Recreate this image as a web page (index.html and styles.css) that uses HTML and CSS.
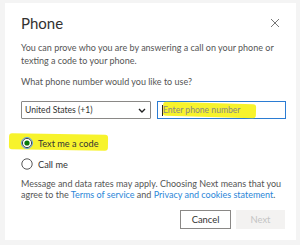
FILE: index.html
```html
<!DOCTYPE html>
<html>
<head>
<meta charset="utf-8">
<link rel="stylesheet" href="styles.css">
</head>
<body>
<div class="dialog">
  <div class="head">
    <div class="title">Phone</div>
    <svg class="close" width="10" height="10" viewBox="0 0 10 10"><path d="M1 1L9 9M9 1L1 9" stroke="#777" stroke-width="1" fill="none"/></svg>
  </div>
  <p class="intro">You can prove who you are by answering a call on your phone or texting a code to your phone.</p>
  <p class="question">What phone number would you like to use?</p>
  <div class="fields">
    <div class="select"><span>United States (+1)</span>
      <svg width="8" height="5" viewBox="0 0 8 5"><path d="M1 1L4 4L7 1" stroke="#222" stroke-width="1.4" fill="none"/></svg>
    </div>
    <div class="input"><span class="caret"></span><span class="ph">Enter phone number</span><span class="mark mark1"></span></div>
  </div>
  <div class="radios">
    <div class="radio sel"><span class="mark mark2"></span>
      <svg width="12" height="12" viewBox="0 0 12 12"><circle cx="6" cy="6" r="5.5" fill="#fff" stroke="#5aa0e0" stroke-width="1"/><circle cx="6" cy="6" r="4.6" fill="none" stroke="#333" stroke-width="0.9"/><circle cx="6" cy="6" r="2.6" fill="#0a7a0a"/></svg>
      <span class="lbl">Text me a code</span></div>
    <div class="radio">
      <svg width="12" height="12" viewBox="0 0 12 12"><circle cx="6" cy="6" r="5.2" fill="#fff" stroke="#444" stroke-width="0.9"/></svg>
      <span class="lbl">Call me</span></div>
  </div>
  <p class="note">Message and data rates may apply. Choosing Next means that you agree to the <a>Terms of service</a> and <a>Privacy and cookies statement</a>.</p>
  <div class="buttons">
    <div class="btn cancel">Cancel</div>
    <div class="btn next">Next</div>
  </div>
</div>
</body>
</html>
```

FILE: styles.css
```css
html, body { margin: 0; padding: 0; }
body {
  background: #f4f4f4;
  font-family: Lato, "Noto Sans", sans-serif;
  width: 300px;
  height: 245px;
  overflow: hidden;
}
.dialog {
  margin: 3px 4px 0 5px;
  height: 237px;
  background: #fff;
  box-sizing: border-box;
  padding: 12px 10px 0 16px;
  display: flex;
  flex-direction: column;
}
.head {
  display: flex;
  justify-content: space-between;
  align-items: center;
  height: 16px;
}
.title {
  font-size: 15px;
  color: #323130;
  line-height: 16px;
}
.close { margin-right: 6px; }
p { margin: 0; }
.intro {
  margin-top: 11px;
  font-size: 9px;
  line-height: 12.7px;
  color: #555;
  width: 264px;
}
.question {
  margin-top: 9px;
  font-size: 9px;
  line-height: 12px;
  color: #555;
}
.fields {
  margin-top: 13px;
  display: flex;
  gap: 6px;
  height: 18px;
}
.select {
  width: 132px;
  box-sizing: border-box;
  border: 1px solid #8a8886;
  border-radius: 1px;
  display: flex;
  align-items: center;
  justify-content: space-between;
  padding: 0 4px 0 3px;
  font-size: 8.6px;
  color: #333;
}
.input {
  position: relative;
  width: 131px;
  box-sizing: border-box;
  border: 1px solid #2b7cd3;
  display: flex;
  align-items: center;
  padding-left: 4px;
  font-size: 8.6px;
  color: #888;
}
.caret { width: 1px; height: 11px; background: #222; }
.ph { position: relative; z-index: 1; }
.mark {
  position: absolute;
  background: #f6f21a;
  opacity: 0.92;
  border-radius: 3px;
}
.mark1 { left: 5px; top: 1px; width: 93px; height: 14px; transform: rotate(1.5deg); }
.radios {
  margin-top: 18px;
  display: flex;
  flex-direction: column;
  gap: 9px;
}
.radio {
  position: relative;
  display: flex;
  align-items: center;
  gap: 5px;
  font-size: 9.2px;
  color: #333;
  height: 12px;
}
.radio svg, .radio .lbl { position: relative; z-index: 1; }
.mark2 { left: -12px; top: -3px; width: 99px; height: 16px; transform: rotate(0.8deg); }
.note {
  margin-top: 7.5px;
  font-size: 9px;
  line-height: 11.5px;
  color: #555;
  width: 272px;
}
.note a { color: #2b86d8; }
.buttons {
  margin-top: 9px;
  display: flex;
  justify-content: flex-end;
  gap: 5px;
  padding-right: 1px;
}
.btn {
  height: 19px;
  box-sizing: border-box;
  display: flex;
  align-items: center;
  justify-content: center;
  font-size: 9.4px;
}
.cancel { border: 1px solid #8a8886; color: #333; width: 51px; }
.next { background: #f3f2f1; color: #c4c4c4; width: 49px; }
```
